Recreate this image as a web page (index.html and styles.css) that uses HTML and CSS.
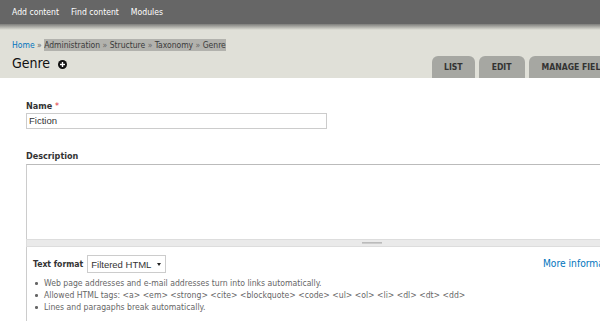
FILE: index.html
```html
<!DOCTYPE html>
<html lang="en">
<head>
<meta charset="utf-8">
<title>Genre</title>
<link rel="stylesheet" href="styles.css">
</head>
<body>
<div class="toolbar">
  <a class="tb-link" href="#">Add content</a>
  <a class="tb-link" href="#">Find content</a>
  <a class="tb-link" href="#">Modules</a>
</div>
<div class="toolbar-shadow"></div>
<div class="header">
  <div class="breadcrumb"><a class="home" href="#">Home</a><span class="sep"> » </span><span class="sel">Administration<span class="sep"> » </span>Structure<span class="sep"> » </span>Taxonomy<span class="sep"> » </span>Genre</span></div>
  <div class="header-row">
    <div class="title-wrap">
      <h1 class="page-title">Genre</h1>
      <svg class="plus" width="9" height="9" viewBox="0 0 9 9"><circle cx="4.5" cy="4.5" r="4.5" fill="#111"/><rect x="2" y="3.8" width="5" height="1.4" fill="#fff"/><rect x="3.8" y="2" width="1.4" height="5" fill="#fff"/></svg>
    </div>
    <ul class="tabs">
      <li class="tab">LIST</li>
      <li class="tab">EDIT</li>
      <li class="tab">MANAGE FIELDS</li>
      <li class="tab">MANAGE DISPLAY</li>
    </ul>
  </div>
</div>
<div class="content">
  <div class="form-item">
    <label class="label">Name <span class="req">*</span></label>
    <div class="text-input">Fiction</div>
  </div>
  <div class="form-item desc">
    <label class="label">Description</label>
    <div class="textarea"></div>
    <div class="grip"><span class="grip-bar"></span></div>
    <div class="filter-wrapper">
      <div class="filter-row">
        <div class="format">
          <span class="format-label">Text format</span>
          <span class="select">Filtered HTML <span class="arrow"></span></span>
        </div>
        <a class="more" href="#">More information about text formats</a>
      </div>
      <ul class="tips">
        <li>Web page addresses and e-mail addresses turn into links automatically.</li>
        <li>Allowed HTML tags: &lt;a&gt; &lt;em&gt; &lt;strong&gt; &lt;cite&gt; &lt;blockquote&gt; &lt;code&gt; &lt;ul&gt; &lt;ol&gt; &lt;li&gt; &lt;dl&gt; &lt;dt&gt; &lt;dd&gt;</li>
        <li>Lines and paragaphs break automatically.</li>
      </ul>
    </div>
  </div>
</div>
</body>
</html>
```

FILE: styles.css
```css
html, body {
  margin: 0;
  padding: 0;
  overflow: hidden;
  background: #fff;
}
body {
  width: 800px;
  font-family: "DejaVu Sans Condensed", "DejaVu Sans", sans-serif;
  font-stretch: condensed;
  color: #333;
}
a { text-decoration: none; }

.toolbar {
  height: 24px;
  background: #666;
  display: flex;
  align-items: center;
  gap: 12px;
  padding-left: 12px;
}
.tb-link {
  color: #fff;
  font-size: 8.6px;
}
.toolbar-shadow {
  height: 6px;
  background: linear-gradient(#7d7d7b, #e0e0d8);
}

.header {
  background: #e0e0d8;
  padding-top: 9px;
}
.breadcrumb {
  padding-left: 12px;
  font-size: 8.5px;
  line-height: 12px;
  color: #555;
}
.breadcrumb .home { color: #0074bd; }
.breadcrumb .sel { background: #b2b2ad; color: #3a3a3a; padding: 1px 0; }
.breadcrumb .sep { color: #666; }

.header-row {
  display: flex;
  align-items: flex-end;
  margin-top: 2px;
}
.title-wrap {
  flex: 0 0 420px;
  display: flex;
  align-items: center;
  padding-left: 12px;
  height: 20px;
  margin-bottom: 5px;
}
.page-title {
  margin: 0;
  font-size: 14px;
  font-weight: normal;
  color: #111;
  line-height: 20px;
}
.plus { margin-left: 8px; margin-top: 2px; }

.tabs {
  display: flex;
  gap: 4px;
  margin: 0;
  padding: 0;
  list-style: none;
}
.tab {
  background: #a6a7a2;
  border-radius: 6px 6px 0 0;
  height: 22px;
  line-height: 23px;
  padding: 0 13px;
  font-size: 8.6px;
  font-weight: bold;
  color: #333;
}
.tab:first-child { padding: 0 12px; }

.content {
  padding: 22px 0 0 26px;
}
.form-item { margin-bottom: 21px; }
.label {
  display: block;
  font-size: 9px;
  font-weight: bold;
  line-height: 12px;
  color: #333;
  margin-bottom: 1px;
}
.req { color: #e0323c; font-weight: normal; }
.text-input {
  box-sizing: border-box;
  width: 301px;
  height: 16px;
  border: 1px solid #ccc;
  font-family: "Liberation Sans", Arial, sans-serif;
  font-size: 9.5px;
  line-height: 14px;
  padding-left: 2px;
  color: #333;
}
.desc .label { margin-bottom: 2px; }
.textarea {
  box-sizing: border-box;
  width: 692px;
  height: 75px;
  border: 1px solid #ccc;
  border-top-color: #bbb;
  border-bottom: 0;
}
.grip {
  box-sizing: border-box;
  width: 692px;
  height: 8px;
  background: #eaeaea;
  border: 1px solid #ddd;
  display: flex;
  justify-content: center;
  align-items: center;
}
.grip-bar {
  width: 20px;
  height: 2px;
  border-top: 1px solid #bbb;
  border-bottom: 1px solid #ccc;
  box-sizing: border-box;
}
.filter-wrapper {
  box-sizing: border-box;
  width: 692px;
  border-left: 1px solid #ccc;
  padding: 8px 8px 10px 6px;
}
.filter-row {
  display: flex;
  justify-content: space-between;
  align-items: center;
}
.format { display: flex; align-items: center; }
.format-label {
  font-size: 8.6px;
  font-weight: bold;
  color: #333;
  margin-right: 4px;
}
.select {
  box-sizing: border-box;
  height: 18px;
  width: 79px;
  border: 1px solid #ccc;
  display: flex;
  align-items: center;
  padding-left: 3px;
  font-family: "Liberation Sans", Arial, sans-serif;
  font-size: 9.5px;
  color: #333;
  gap: 6px;
}
.arrow {
  width: 0;
  height: 0;
  border-left: 2px solid transparent;
  border-right: 2px solid transparent;
  border-top: 3px solid #222;
}
.more {
  color: #0074bd;
  font-size: 10.2px;
  margin-top: -2px;
}
.tips {
  margin: 4px 0 0;
  padding-left: 11px;
  font-size: 8.6px;
  line-height: 12px;
  color: #666;
  list-style: none;
}
.tips li { position: relative; }
.tips li::before {
  content: "";
  position: absolute;
  left: -9px;
  top: 5px;
  width: 2.5px;
  height: 2.5px;
  border-radius: 50%;
  background: #666;
}
```
